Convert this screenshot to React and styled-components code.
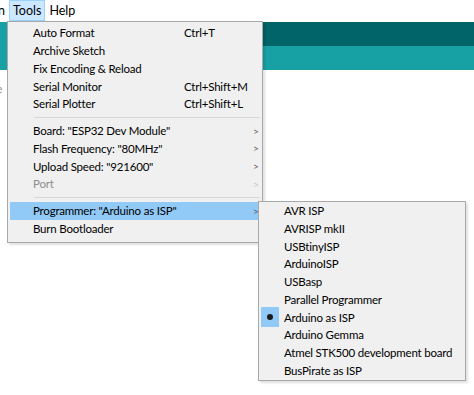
import React from 'react';
import styled, {createGlobalStyle} from 'styled-components';

const GlobalStyle = createGlobalStyle`
  html, body {
    margin: 0;
    padding: 0;
    background: #ffffff;
  }
  body {
    font-family: Lato, "Noto Sans", sans-serif;
    font-size: 11.5px;
    letter-spacing: -0.2px;
    color: #000;
  }
`

const Window = styled.div`
  position: relative;
  width: 474px;
  height: 395px;
  overflow: hidden;
  background: #fff;
`

const MenuBar = styled.div`
  display: flex;
  align-items: center;
  height: 21px;
  margin-left: -6px;
`

const MenuTitle = styled.div`
  height: 19px;
  display: flex;
  align-items: center;
  padding: 0 3px;
  border: 1px solid ${p => p.$open ? '#99d1ff' : 'transparent'};
  background: ${p => p.$open ? '#cce8ff' : 'transparent'};
  font-size: 12.5px;
  letter-spacing: 0;
`

const Toolbar = styled.div`
  display: flex;
  height: 24px;
  margin-top: 1px;
  background: #006468;
`

const ToolButton = styled.div`
  width: 7px;
  background: #17a1a5;
`

const TabBar = styled.div`
  display: flex;
  height: 24px;
  background: #17a1a5;
`

const Editor = styled.div`
  padding: 12px 0 0 0;
  color: #888;
  font-size: 11px;
  margin-left: -9px;
`

const Dropdown = styled.div`
  position: absolute;
  top: 21px;
  left: 7px;
  width: 254px;
  padding: 2px 0 5px 0;
  background: #f0f0f0;
  border: 1px solid #a8a8a8;
  box-shadow: 2px 2px 2px rgba(0, 0, 0, 0.12);
`

const SubMenu = styled(Dropdown)`
  top: -1px;
  left: 100%;
  margin-left: -2px;
  width: 206px;
  padding: 0 0 1px 0;
`

const Item = styled.div`
  position: relative;
  display: flex;
  align-items: center;
  height: 17.75px;
  padding-left: 23px;
  margin: 0 2px;
  background: ${p => p.$active ? '#91c9f7' : 'transparent'};
  color: ${p => p.$disabled ? '#8d8d8d' : '#000'};
  white-space: nowrap;
`

const Label = styled.span`
  flex: 1;
`

const Shortcut = styled.span`
  width: 76px;
`

const Arrow = styled.span`
  width: 7px;
  color: ${p => p.$disabled ? '#c4c4c4' : '#5a5a5a'};
  font-size: 10px;
`

const Separator = styled.div`
  height: 1px;
  margin: 4px 2px 4px 26px;
  background: #d7d7d7;
`

const Check = styled.span`
  position: absolute;
  left: 0;
  top: -1px;
  width: 18px;
  height: 20px;
  display: flex;
  align-items: center;
  justify-content: center;
  background: #91c9f7;
  &::after {
    content: '';
    width: 6px;
    height: 6px;
    border-radius: 50%;
    background: #1a1a1a;
  }
`

const programmers = [
    'AVR ISP',
    'AVRISP mkII',
    'USBtinyISP',
    'ArduinoISP',
    'USBasp',
    'Parallel Programmer',
    'Arduino as ISP',
    'Arduino Gemma',
    'Atmel STK500 development board',
    'BusPirate as ISP',
]

function App() {
    return (
        <Window>
            <GlobalStyle/>
            <MenuBar>
                <MenuTitle>n</MenuTitle>
                <MenuTitle $open>Tools</MenuTitle>
                <MenuTitle>Help</MenuTitle>
            </MenuBar>
            <Toolbar><ToolButton/></Toolbar>
            <TabBar/>
            <Editor>ee</Editor>

            <Dropdown>
                <Item><Label>Auto Format</Label><Shortcut>Ctrl+T</Shortcut></Item>
                <Item><Label>Archive Sketch</Label></Item>
                <Item><Label>Fix Encoding &amp; Reload</Label></Item>
                <Item><Label>Serial Monitor</Label><Shortcut>Ctrl+Shift+M</Shortcut></Item>
                <Item><Label>Serial Plotter</Label><Shortcut>Ctrl+Shift+L</Shortcut></Item>
                <Separator/>
                <Item><Label>Board: "ESP32 Dev Module"</Label><Arrow>&gt;</Arrow></Item>
                <Item><Label>Flash Frequency: "80MHz"</Label><Arrow>&gt;</Arrow></Item>
                <Item><Label>Upload Speed: "921600"</Label><Arrow>&gt;</Arrow></Item>
                <Item $disabled><Label>Port</Label><Arrow $disabled>&gt;</Arrow></Item>
                <Separator/>
                <Item $active>
                    <Label>Programmer: "Arduino as ISP"</Label><Arrow>&gt;</Arrow>
                    <SubMenu>
                        {programmers.map(name => (
                            <Item key={name}>
                                {name === 'Arduino as ISP' && <Check/>}
                                <Label>{name}</Label>
                            </Item>
                        ))}
                    </SubMenu>
                </Item>
                <Item><Label>Burn Bootloader</Label></Item>
            </Dropdown>
        </Window>
    );
}

export default App;
